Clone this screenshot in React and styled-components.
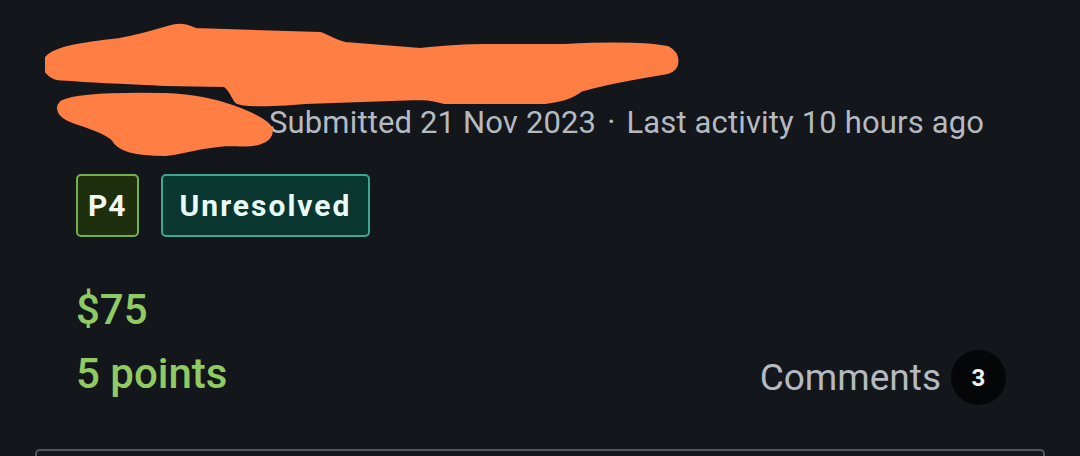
import React from "react";
import styled, { createGlobalStyle } from "styled-components";

const GlobalStyle = createGlobalStyle`
  html, body {
    margin: 0;
    background: #13161b;
  }
  body {
    font-family: Roboto, "Noto Sans", sans-serif;
    -webkit-font-smoothing: antialiased;
  }
`;

const Page = styled.div`
  width: 1080px;
  height: 456px;
  overflow: hidden;
  background: #13161b;
  display: flex;
  flex-direction: column;
`;

const Card = styled.div`
  flex: 1;
  display: flex;
  flex-direction: column;
  padding: 27px 74px 0 76px;
`;

const Header = styled.div`
  position: relative;
  display: flex;
  flex-direction: column;
  margin-left: -31px;
`;

const TitlePlaceholder = styled.div`
  height: 82px;
`;

const Meta = styled.div`
  display: flex;
  align-items: center;
  padding-left: 15px;
  font-size: 31px;
  letter-spacing: 0.15px;
  color: #b5bac1;
  height: 30px;
  margin-top: -2px;
`;

const UserPlaceholder = styled.span`
  width: 209px;
  flex: none;
`;

const Dot = styled.span`
  margin: 0 11px;
`;

const Redaction = styled.svg`
  position: absolute;
  left: 0;
  top: -27px;
  pointer-events: none;
`;

const Badges = styled.div`
  display: flex;
  gap: 22px;
  margin-top: 37px;
`;

const Badge = styled.div`
  box-sizing: border-box;
  height: 63px;
  padding: 0 ${(p) => p.$pad}px;
  display: flex;
  align-items: center;
  border: 2px solid ${(p) => p.$border};
  background: ${(p) => p.$bg};
  color: ${(p) => p.$fg};
  border-radius: 5px;
  font-weight: 700;
  font-size: 30px;
  letter-spacing: ${(p) => p.$spacing || 0}px;
`;

const Footer = styled.div`
  display: flex;
  align-items: flex-end;
  justify-content: space-between;
  margin-top: 49px;
`;

const Rewards = styled.div`
  display: flex;
  flex-direction: column;
  gap: 16px;
  color: #8fca63;
  font-size: 42px;
  font-weight: 500;
  line-height: 48px;
`;

const CommentsLink = styled.div`
  display: flex;
  align-items: center;
  gap: 10px;
  color: #b5bac1;
  font-size: 37px;
  margin-bottom: -7px;
`;

const CountBubble = styled.span`
  width: 55px;
  height: 55px;
  border-radius: 50%;
  background: #050608;
  color: #eef0f2;
  display: flex;
  align-items: center;
  justify-content: center;
  font-size: 24px;
  font-weight: 700;
`;

const NextCard = styled.div`
  margin: auto 35px 0 35px;
  height: 7px;
  border: 2px solid #53565c;
  border-bottom: none;
  border-radius: 5px 5px 0 0;
  box-sizing: border-box;
`;

const ORANGE = "#fe7e44";

// redaction marks, coordinates relative to x = 45 on the page
const Scribble = () => (
  <Redaction width="650" height="170" viewBox="0 0 650 170">
    <g fill={ORANGE} stroke={ORANGE} strokeWidth="8" strokeLinejoin="round">
      <path d="M3 60 C10 50 40 46 75 42 C100 38 120 30 132 28 C140 27 145 30 150 32 L275 36 C285 40 290 44 300 46 L375 52 C395 50 420 48 440 48 L520 48 C560 46 600 46 622 50 C632 55 632 68 622 70 C600 74 560 80 535 88 C525 96 515 98 500 100 L400 100 C390 98 385 96 375 96 L260 100 C240 102 200 104 193 100 C188 92 186 86 180 83 L120 82 C80 80 30 78 12 76 C2 72 0 66 3 60 Z" />
      <path d="M18 104 C30 98 70 96 120 97 C150 98 175 104 195 112 C210 118 222 124 224 130 C224 140 210 144 190 142 C160 142 140 150 120 152 C90 152 75 148 70 138 C60 128 40 124 26 118 C16 114 14 108 18 104 Z" />
    </g>
  </Redaction>
);

export default function App() {
  return (
    <>
      <GlobalStyle />
      <Page>
        <Card>
          <Header>
            <TitlePlaceholder />
            <Meta>
              <UserPlaceholder />
              <span>Submitted 21 Nov 2023</span>
              <Dot>·</Dot>
              <span>Last activity 10 hours ago</span>
            </Meta>
            <Scribble />
          </Header>
          <Badges>
            <Badge $pad={10} $border="#76b04e" $bg="#1d2f0d" $fg="#f2f6ec" $spacing={1}>
              P4
            </Badge>
            <Badge $pad={17} $border="#3aa893" $bg="#0a3630" $fg="#e8fbf7" $spacing={2}>
              Unresolved
            </Badge>
          </Badges>
          <Footer>
            <Rewards>
              <span>$75</span>
              <span>5 points</span>
            </Rewards>
            <CommentsLink>
              Comments
              <CountBubble>3</CountBubble>
            </CommentsLink>
          </Footer>
        </Card>
        <NextCard />
      </Page>
    </>
  );
}
